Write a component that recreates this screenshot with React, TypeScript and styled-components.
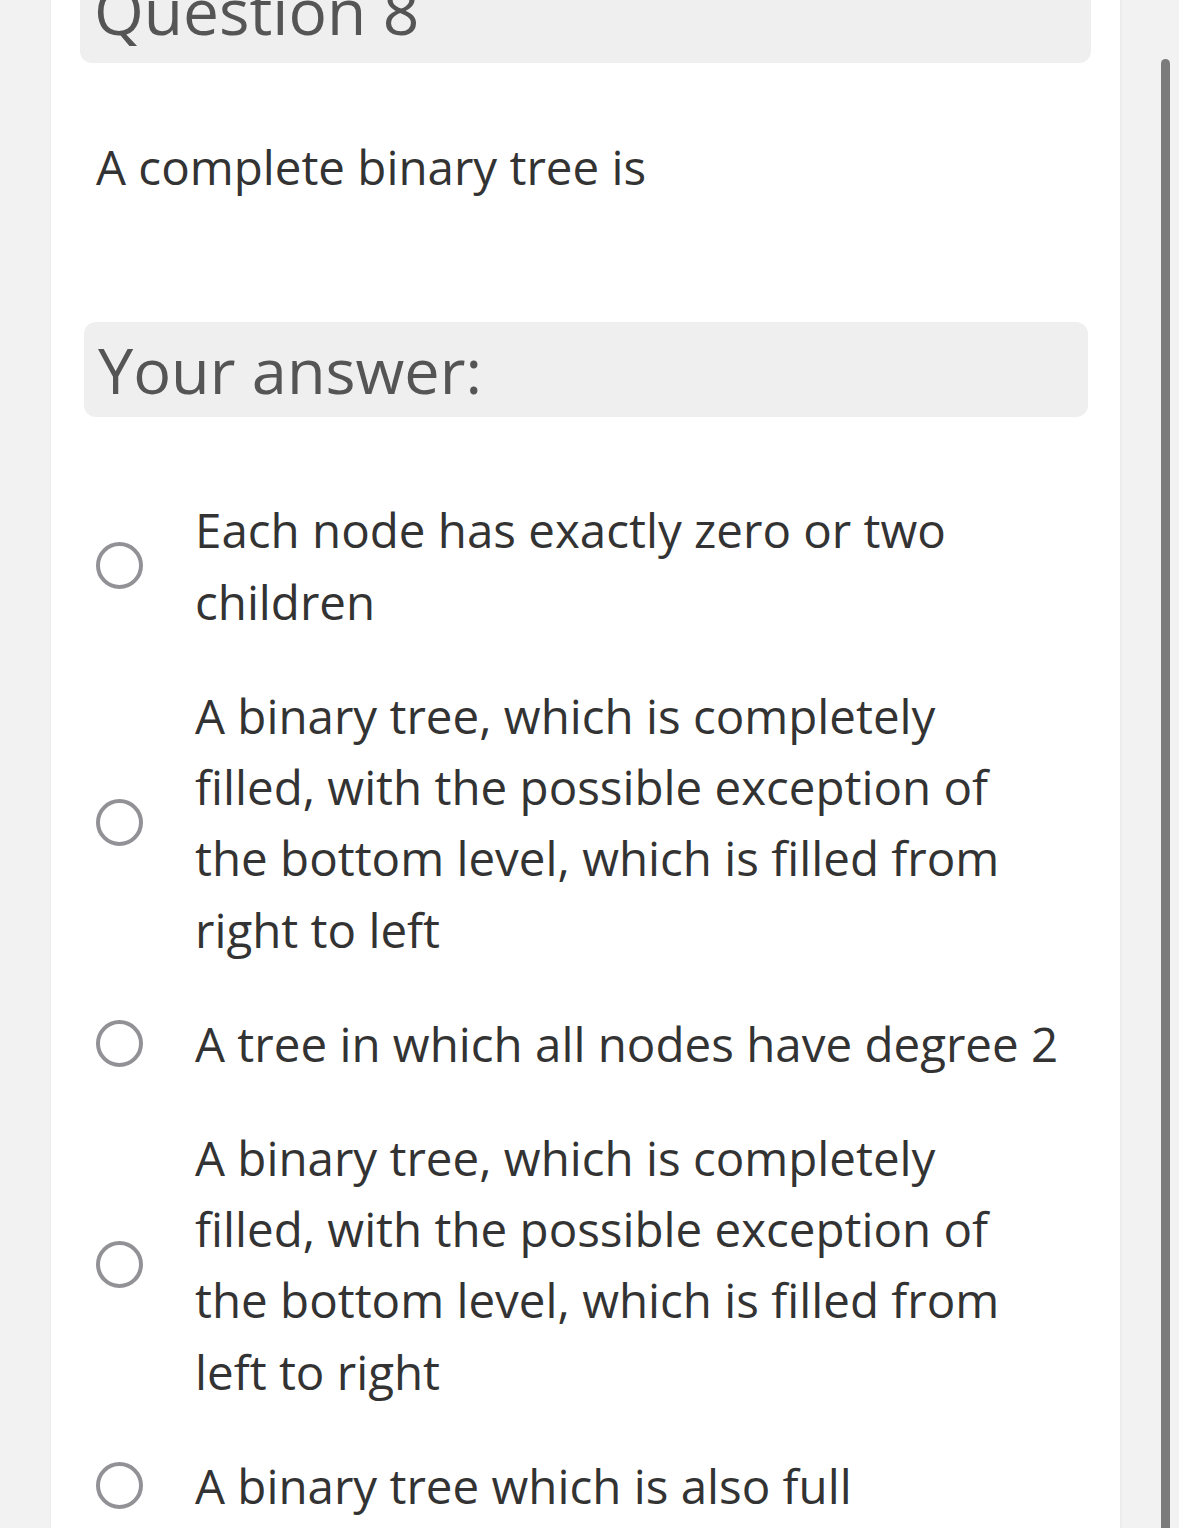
import React from "react";
import styled, { createGlobalStyle } from "styled-components";

const GlobalStyle = createGlobalStyle`
  html, body {
    margin: 0;
    padding: 0;
    background: #f2f2f2;
    font-family: "Open Sans", "Noto Sans", sans-serif;
    overflow: hidden;
  }
  * { box-sizing: border-box; }
`;

const Page = styled.div`
  width: 1179px;
  height: 1528px;
  overflow: hidden;
  padding-left: 50px;
`;

const Card = styled.div`
  width: 1072px;
  min-height: 1600px;
  background: #ffffff;
  border-left: 1px solid #ececec;
  border-right: 2px solid #ececec;
  padding: 0 29px 0 29px;
`;

const QuestionHeader = styled.div`
  margin-top: -48px;
  background: #efefef;
  border-radius: 0 0 12px 12px;
  padding: 0 16px 0 14px;
  height: 111px;
  display: flex;
  align-items: flex-end;
  padding-bottom: 9px;
  font-size: 64px;
  line-height: 87px;
  color: #555555;
`;

const QuestionText = styled.p`
  margin: 68px 0 0 0;
  padding-left: 16px;
  font-size: 47.5px;
  line-height: 71.3px;
  color: #333333;
`;

const AnswerHeader = styled.div`
  margin: 120px 3px 0 4px;
  height: 95px;
  background: #efefef;
  border-radius: 12px;
  padding-left: 14px;
  display: flex;
  align-items: center;
  font-size: 63px;
  color: #555555;
`;

const Options = styled.div`
  margin-top: 77px;
  padding-left: 16px;
  display: flex;
  flex-direction: column;
  gap: 42.5px;
`;

const Option = styled.label`
  display: flex;
  align-items: center;
  gap: 52px;
`;

const Radio = styled.span`
  flex: 0 0 auto;
  width: 47px;
  height: 47px;
  border-radius: 50%;
  border: 4px solid #929296;
`;

const Label = styled.span`
  width: 864px;
  font-size: 47.5px;
  line-height: 71.4px;
  color: #333333;
`;

const ScrollThumb = styled.div`
  position: fixed;
  top: 59px;
  right: 9px;
  bottom: 0;
  width: 9px;
  background: #7b7b7b;
  border-radius: 5px 5px 0 0;
`;

const options = [
  "Each node has exactly zero or two children",
  "A binary tree, which is completely filled, with the possible exception of the bottom level, which is filled from right to left",
  "A tree in which all nodes have degree 2",
  "A binary tree, which is completely filled, with the possible exception of the bottom level, which is filled from left to right",
  "A binary tree which is also full",
];

export default function App() {
  return (
    <>
      <GlobalStyle />
      <Page>
        <Card>
          <QuestionHeader>Question 8</QuestionHeader>
          <QuestionText>A complete binary tree is</QuestionText>
          <AnswerHeader>Your answer:</AnswerHeader>
          <Options>
            {options.map((o) => (
              <Option key={o}>
                <Radio />
                <Label>{o}</Label>
              </Option>
            ))}
          </Options>
        </Card>
      </Page>
      <ScrollThumb />
    </>
  );
}
